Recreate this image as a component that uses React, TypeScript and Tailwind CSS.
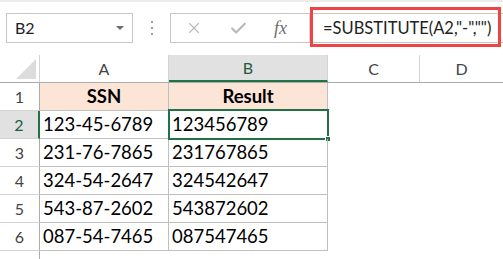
import { X, Check } from "lucide-react";

const rows = [
  ["123-45-6789", "123456789"],
  ["231-76-7865", "231767865"],
  ["324-54-2647", "324542647"],
  ["543-87-2602", "543872602"],
  ["087-54-7465", "087547465"],
];

const cellFont = { fontFamily: "Lato, 'Open Sans', sans-serif" };

const App = () => {
  return (
    <div
      className="w-[503px] h-[259px] bg-white overflow-hidden relative text-black"
      style={cellFont}
    >
      {/* top strip */}
      <div className="h-[2px] bg-[#ececec]" />

      {/* Formula bar row */}
      <div className="h-[53px] flex items-start pt-[11px]">
        {/* Name box */}
        <div className="ml-[6px] w-[127px] h-[30px] border border-[#c6c6c6] flex items-center pl-[8px] pr-[8px]">
          <span className="text-[16px] text-[#222] flex-1 leading-none">B2</span>
          <span className="w-0 h-0 border-l-[4px] border-r-[4px] border-t-[4px] border-l-transparent border-r-transparent border-t-[#6b6b6b]" />
        </div>

        {/* Dots */}
        <div className="w-[37px] h-[30px] flex flex-col items-center justify-center gap-[4px]">
          <span className="w-[2px] h-[2px] bg-[#9a9a9a]" />
          <span className="w-[2px] h-[2px] bg-[#9a9a9a]" />
          <span className="w-[2px] h-[2px] bg-[#9a9a9a]" />
        </div>

        {/* Formula bar */}
        <div className="flex-1 h-[30px] border border-r-0 border-[#c6c6c6] flex items-center">
          <div className="w-[139px] h-full flex items-center border-r border-[#d4d4d4]">
            <X className="ml-[14px] w-[18px] h-[18px] text-[#b8b8b8]" strokeWidth={1.5} />
            <Check className="ml-[26px] w-[19px] h-[19px] text-[#b8b8b8]" strokeWidth={2.75} />
            <span
              className="ml-[26px] text-[18px] italic text-[#6e6e6e] leading-none"
              style={{ fontFamily: "'Liberation Serif', serif" }}
            >
              fx
            </span>
          </div>
          <div className="flex-1 pl-[13px] text-[16.5px] text-[#222] leading-none whitespace-nowrap">
            =SUBSTITUTE(A2,"-","")
          </div>
        </div>
      </div>

      {/* Red annotation box */}
      <div className="absolute left-[310px] top-[7px] w-[191px] h-[40px] border-[3px] border-[#f04444]" />

      {/* Column headers */}
      <div className="flex h-[28px] border-b border-[#ababab]">
        <div className="w-[40px] h-full relative border-r border-[#d4d4d4]">
          <svg className="absolute right-[3px] bottom-[3px]" width="20" height="20" viewBox="0 0 20 20">
            <polygon points="20,0 20,20 0,20" fill="#dcdcdc" />
          </svg>
        </div>
        <div className="w-[129px] h-full flex items-center justify-center border-r border-[#d4d4d4] text-[16px] text-[#444]">
          A
        </div>
        <div className="w-[159px] h-full flex items-center justify-center bg-[#e1e1e1] border-b-2 border-[#217346] border-r border-r-[#d4d4d4] text-[16px] text-[#1f5c3c]">
          B
        </div>
        <div className="w-[92px] h-full flex items-center justify-center border-r border-[#d4d4d4] text-[16px] text-[#444]">
          C
        </div>
        <div className="flex-1 h-full flex items-center justify-center text-[16px] text-[#444]">
          D
        </div>
      </div>

      {/* Row 1 - table header */}
      <div className="flex h-[28px]">
        <div className="w-[40px] h-full flex items-center justify-center border-r border-[#ababab] border-b border-b-[#d4d4d4] text-[16px] text-[#444]">
          1
        </div>
        <div className="w-[129px] h-full flex items-center justify-center bg-[#fce4d6] border-r border-b border-[#bfbfbf] text-[18.5px] font-bold">
          SSN
        </div>
        <div className="w-[159px] h-full flex items-center justify-center bg-[#fce4d6] border-r border-b border-[#bfbfbf] text-[18.5px] font-bold">
          Result
        </div>
      </div>

      {/* Data rows */}
      {rows.map(([ssn, result], i) => {
        const selected = i === 0;
        return (
          <div key={i} className="flex h-[28px]">
            <div
              className={
                selected
                  ? "w-[40px] h-full flex items-center justify-center bg-[#e1e1e1] border-r-2 border-r-[#217346] border-b border-b-[#d4d4d4] text-[16px] text-[#1f5c3c]"
                  : "w-[40px] h-full flex items-center justify-center border-r border-[#ababab] border-b border-b-[#d4d4d4] text-[16px] text-[#444]"
              }
            >
              {i + 2}
            </div>
            <div className="w-[129px] h-full flex items-center pl-[3px] border-r border-b border-[#bfbfbf] text-[18.5px]">
              {ssn}
            </div>
            <div className="w-[159px] h-full flex items-center pl-[3px] border-r border-b border-[#bfbfbf] text-[18.5px] relative">
              {result}
              {selected && (
                <>
                  <div className="absolute left-[-1px] top-[-2px] right-[-2px] bottom-[-2px] border-2 border-[#217346]" />
                  <div className="absolute right-[-4px] bottom-[-4px] w-[6px] h-[6px] bg-[#217346] border border-white" />
                </>
              )}
            </div>
          </div>
        );
      })}

      {/* Empty row below */}
      <div className="flex h-[28px]">
        <div className="w-[40px] h-full border-r border-[#ababab]" />
      </div>
    </div>
  );
};

export default App;
